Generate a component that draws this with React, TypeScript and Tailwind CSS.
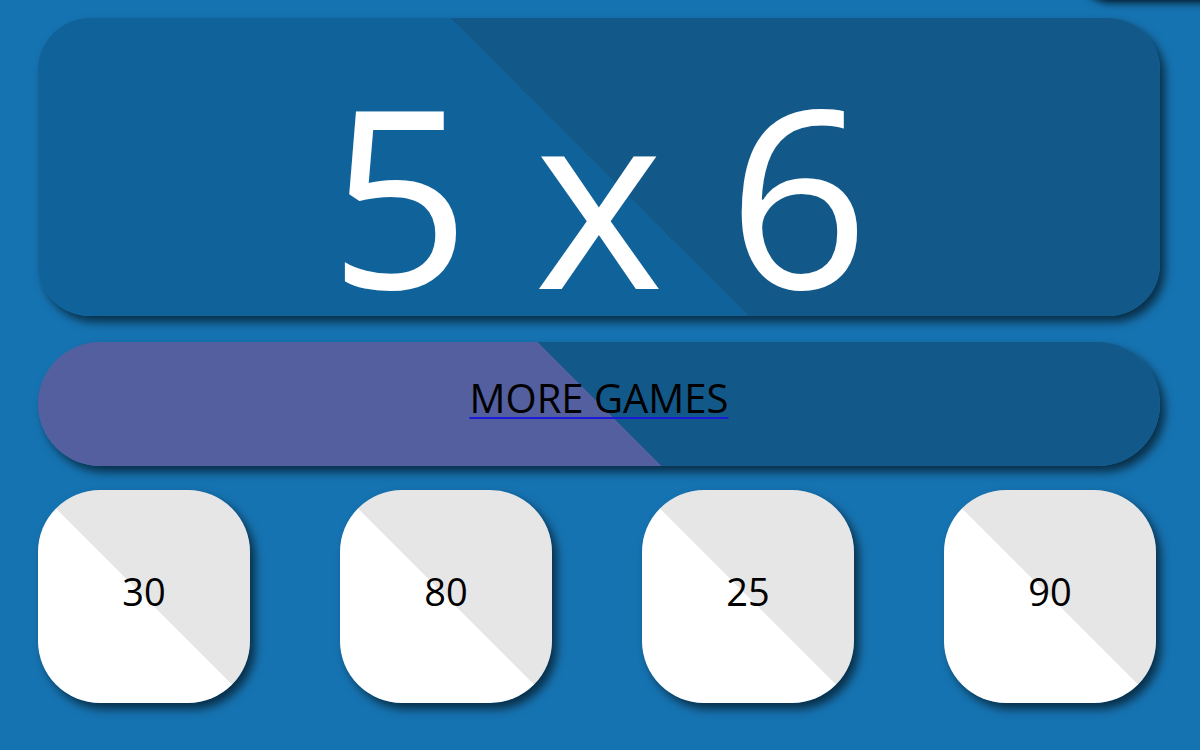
const answers = ["30", "80", "25", "90"];

export default function App() {
  return (
    <div
      className="relative h-[750px] w-[1200px] overflow-hidden bg-[#1673b1] pl-[38px] pt-[18px]"
      style={{ fontFamily: '"Open Sans", "Noto Sans", sans-serif' }}
    >
      {/* shadow of the element sitting above the viewport */}
      <div className="absolute left-[1080px] top-[-60px] h-[60px] w-[200px] rounded-[30px] bg-[#1673b1] shadow-[0_2px_8px_rgba(0,0,0,0.9)]" />

      <div className="flex w-[1122px] flex-col">
        <div className="flex h-[298px] items-start justify-center rounded-[52px] bg-[linear-gradient(45deg,#0f639a_50%,#12598a_50%)] shadow-[5px_6px_10px_rgba(0,0,0,0.6)]">
          <span className="mt-[52px] text-[247px] leading-[1] text-white">5 x 6</span>
        </div>

        <div className="mt-[26px] flex h-[124px] items-center justify-center rounded-full bg-[linear-gradient(45deg,#545fa0_50%,#12598a_50%)] pb-[12px] shadow-[5px_6px_10px_rgba(0,0,0,0.6)]">
          <a
            href="#"
            className="text-[40px] leading-none text-black underline decoration-[#1a1ad6] decoration-2 underline-offset-[4px]"
          >
            MORE GAMES
          </a>
        </div>

        <div className="mt-[24px] flex gap-[90px]">
          {answers.map((a) => (
            <button
              key={a}
              className="flex h-[213px] w-[212px] items-center justify-center rounded-[62px] bg-[linear-gradient(45deg,#ffffff_50%,#e6e6e6_50%)] pb-[10px] text-[38px] text-black shadow-[5px_6px_10px_rgba(0,0,0,0.6)]"
            >
              {a}
            </button>
          ))}
        </div>
      </div>
    </div>
  );
}
